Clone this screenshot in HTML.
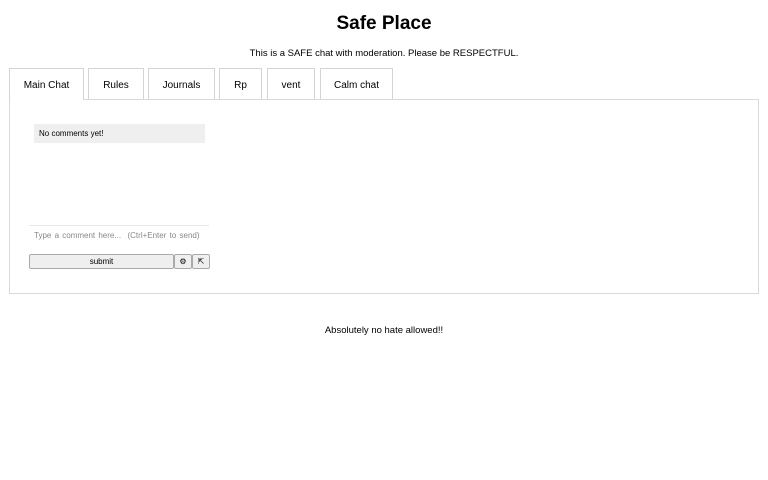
<!DOCTYPE html>
<html><head><style>
body{margin:0;background:#fff;font-family:"Liberation Sans",sans-serif;color:#000;width:768px;height:480px;position:relative;overflow:hidden}
.a{position:absolute}
h1{position:absolute;left:0;width:768px;top:13px;margin:0;text-align:center;font-size:19px;font-weight:bold}
.tab{position:absolute;top:68px;height:31px;border:1px solid #d4d4d4;border-bottom:none;background:#fff;font-size:10px;line-height:33px;text-align:center;box-sizing:border-box}
</style></head><body>
<h1>Safe Place</h1>
<div class="a" style="left:0;width:768px;top:48px;text-align:center;font-size:9.5px">This is a SAFE chat with moderation. Please be RESPECTFUL.</div>
<div class="a" style="left:9px;top:99px;width:750px;height:195px;border:1px solid #d9d9d9;box-sizing:border-box"></div>
<div class="tab" style="left:9px;width:75px;height:32px;z-index:2">Main Chat</div>
<div class="tab" style="left:88px;width:56px">Rules</div>
<div class="tab" style="left:148px;width:67px">Journals</div>
<div class="tab" style="left:219px;width:43px">Rp</div>
<div class="tab" style="left:267px;width:48px">vent</div>
<div class="tab" style="left:320px;width:73px">Calm chat</div>
<div class="a" style="left:34px;top:124px;width:171px;height:19px;background:#efefef;font-size:8px;line-height:20px;padding-left:5px;box-sizing:border-box">No comments yet!</div>
<div class="a" style="left:29px;top:225px;width:180px;border-top:1px solid #e6e6e6"></div>
<div class="a" style="left:34px;top:231px;font-size:8px;color:#888;word-spacing:1px">Type a comment here...&nbsp; (Ctrl+Enter to send)</div>
<div class="a" style="left:29px;top:254px;width:145px;height:15px;border:1px solid #aaa;border-radius:2px;background:#efefef;box-sizing:border-box;font-size:8px;line-height:14px;text-align:center">submit</div>
<div class="a" style="left:174px;top:254px;width:18px;height:15px;border:1px solid #aaa;border-radius:2px;background:#efefef;box-sizing:border-box;font-size:8px;line-height:14px;text-align:center">⚙</div>
<div class="a" style="left:192px;top:254px;width:18px;height:15px;border:1px solid #aaa;border-radius:2px;background:#efefef;box-sizing:border-box;font-size:8px;line-height:14px;text-align:center">⇱</div>
<div class="a" style="left:0;width:768px;top:325px;text-align:center;font-size:9.5px">Absolutely no hate allowed!!</div>
</body></html>
